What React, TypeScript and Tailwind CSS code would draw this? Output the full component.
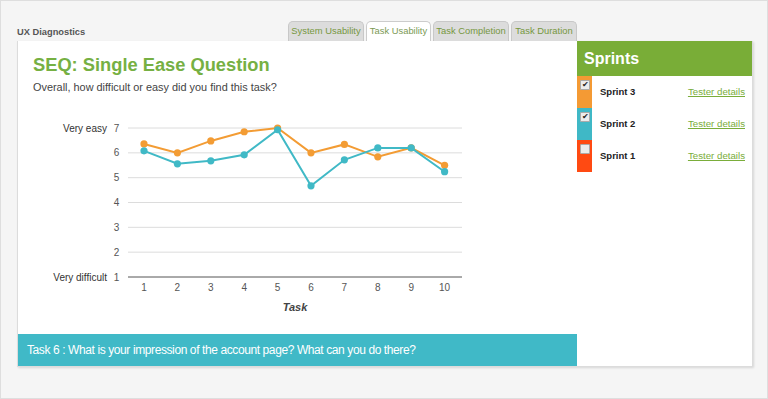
import React from 'react'

const orange = [6.36, 6.0, 6.48, 6.85, 7.0, 6.0, 6.34, 5.84, 6.2, 5.5]
const teal = [6.08, 5.56, 5.68, 5.92, 6.93, 4.67, 5.72, 6.2, 6.2, 5.24]

// chart coords are page coords minus panel origin (17, 110)
const ox = 17
const oy = 110
const xAt = (i: number) => 143 + i * 33.4 - ox
const yAt = (v: number) => 276 - (v - 1) * 24.83 - oy

function Series({ data, color }: { data: number[]; color: string }) {
  const pts = data.map((v, i) => `${xAt(i)},${yAt(v)}`).join(' ')
  return (
    <g>
      <polyline points={pts} fill="none" stroke={color} strokeWidth={2} />
      {data.map((v, i) => (
        <circle key={i} cx={xAt(i)} cy={yAt(v)} r={3.6} fill={color} />
      ))}
    </g>
  )
}

function Chart() {
  const ticks = [1, 2, 3, 4, 5, 6, 7]
  return (
    <svg width={559} height={205} className="block" style={{ fontFamily: '"Liberation Sans", Arial, sans-serif' }}>
      {ticks.map(t => (
        <g key={t}>
          <line
            x1={127 - ox}
            x2={461 - ox}
            y1={yAt(t)}
            y2={yAt(t)}
            stroke={t === 1 ? '#555' : '#dcdcdc'}
            strokeWidth={1}
          />
          <text x={115.5 - ox} y={yAt(t) + 3.5} fontSize={10} fill="#555" textAnchor="middle">
            {t}
          </text>
        </g>
      ))}
      <text x={106 - ox} y={yAt(7) + 3.5} fontSize={10} fill="#333" textAnchor="end">Very easy</text>
      <text x={106 - ox} y={yAt(1) + 3.5} fontSize={10} fill="#333" textAnchor="end">Very difficult</text>
      {orange.map((_, i) => (
        <text key={i} x={xAt(i)} y={289.5 - oy} fontSize={10} fill="#555" textAnchor="middle">
          {i + 1}
        </text>
      ))}
      <text x={294 - ox} y={310 - oy} fontSize={11} fontWeight="bold" fontStyle="italic" fill="#444" textAnchor="middle">
        Task
      </text>
      <Series data={orange} color="#f39c34" />
      <Series data={teal} color="#40b9c6" />
    </svg>
  )
}

const tabs = [
  { label: 'System Usability', w: 'w-[76px]' },
  { label: 'Task Usability', w: 'w-[65px]' },
  { label: 'Task Completion', w: 'w-[76px]' },
  { label: 'Task Duration', w: 'w-[66px]' },
]

function Check({ on }: { on: boolean }) {
  return (
    <span className="flex h-[10px] w-[10px] items-center justify-center rounded-[1px] border border-[#aaa] bg-[#ececec] text-[8px] leading-none text-[#222]">
      {on ? '✔' : ''}
    </span>
  )
}

const sprints = [
  { name: 'Sprint 3', color: 'bg-[#f49a34]', on: true },
  { name: 'Sprint 2', color: 'bg-[#3fb8c6]', on: true },
  { name: 'Sprint 1', color: 'bg-[#ff4a12]', on: false },
]

export default function App() {
  return (
    <div
      className="h-[399px] w-[768px] border border-[#dedede] bg-[#f5f5f5] pl-[16px] pt-[20px]"
      style={{ fontFamily: '"Liberation Sans", Arial, sans-serif' }}
    >
      <div className="flex h-[20px] w-[560px] items-end justify-between">
        <span className="pb-[1px] text-[9.3px] font-bold text-[#555]">UX Diagnostics</span>
        <div className="flex h-[20px] gap-[2px]">
          {tabs.map(t => (
            <div
              key={t.label}
              className={
                t.label === 'Task Usability'
                  ? `flex ${t.w} items-center justify-center rounded-t-[5px] border border-b-0 border-[#ccc] bg-white text-[9.4px] text-[#7b9a55]`
                  : `flex ${t.w} items-center justify-center rounded-t-[5px] border border-b-0 border-[#c8c8c8] bg-[#dcdcdc] text-[9.4px] text-[#76973f]`
              }
            >
              {t.label}
            </div>
          ))}
        </div>
      </div>
      <div className="flex h-[326px] w-[736px] shadow-[1px_1px_2px_rgba(0,0,0,0.12)]">
        <div className="flex w-[560px] flex-col border-b border-l border-[#dcdcdc] bg-white">
          <div className="pl-[15px] pt-[13px]">
            <div className="text-[18.3px] font-bold leading-[22px] text-[#76b043]">SEQ: Single Ease Question</div>
            <div className="mt-[4px] text-[10.9px] leading-[14px] text-[#444]">Overall, how difficult or easy did you find this task?</div>
          </div>
          <div className="mt-[17px]">
            <Chart />
          </div>
          <div className="mt-auto flex h-[32px] items-center bg-[#40b9c7] pl-[9px] text-[12px] tracking-[-0.4px] text-white">
            Task 6 : What is your impression of the account page? What can you do there?
          </div>
        </div>
        <div className="flex w-[176px] flex-col border-b border-r border-[#dcdcdc] bg-white">
          <div className="flex h-[35px] items-center bg-[#79ad37] pl-[7px] text-[16px] font-bold text-white">Sprints</div>
          {sprints.map(s => (
            <div key={s.name} className="flex h-[32px]">
              <div className={`w-[15px] ${s.color} pl-[3px] pt-[4px]`}>
                <Check on={s.on} />
              </div>
              <div className="flex flex-1 items-center justify-between pl-[8px] pr-[7px] pt-[1px]">
                <span className="text-[9.5px] font-bold text-[#222]">{s.name}</span>
                <span className="text-[9.7px] text-[#7aad3a] underline">Tester details</span>
              </div>
            </div>
          ))}
        </div>
      </div>
    </div>
  )
}
